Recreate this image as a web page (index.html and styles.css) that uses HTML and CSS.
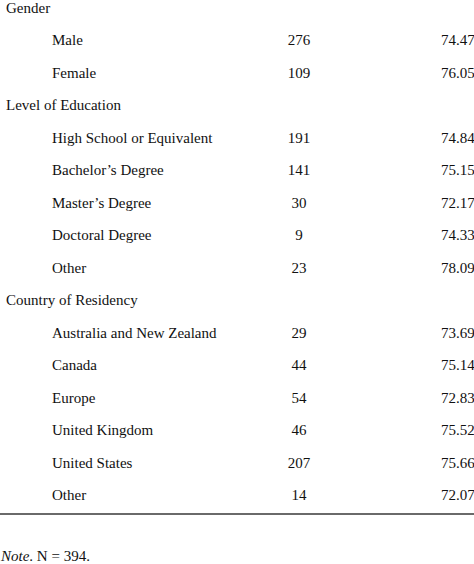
FILE: index.html
```html
<!DOCTYPE html>
<html>
<head>
<meta charset="utf-8">
<link rel="stylesheet" href="styles.css">
</head>
<body>
<div class="table">
  <div class="row"><span class="cat">Gender</span><span class="n"></span><span class="m"></span></div>
  <div class="row"><span class="sub">Male</span><span class="n">276</span><span class="m">74.47</span></div>
  <div class="row"><span class="sub">Female</span><span class="n">109</span><span class="m">76.05</span></div>
  <div class="row"><span class="cat">Level of Education</span><span class="n"></span><span class="m"></span></div>
  <div class="row"><span class="sub">High School or Equivalent</span><span class="n">191</span><span class="m">74.84</span></div>
  <div class="row"><span class="sub">Bachelor’s Degree</span><span class="n">141</span><span class="m">75.15</span></div>
  <div class="row"><span class="sub">Master’s Degree</span><span class="n">30</span><span class="m">72.17</span></div>
  <div class="row"><span class="sub">Doctoral Degree</span><span class="n">9</span><span class="m">74.33</span></div>
  <div class="row"><span class="sub">Other</span><span class="n">23</span><span class="m">78.09</span></div>
  <div class="row"><span class="cat">Country of Residency</span><span class="n"></span><span class="m"></span></div>
  <div class="row"><span class="sub">Australia and New Zealand</span><span class="n">29</span><span class="m">73.69</span></div>
  <div class="row"><span class="sub">Canada</span><span class="n">44</span><span class="m">75.14</span></div>
  <div class="row"><span class="sub">Europe</span><span class="n">54</span><span class="m">72.83</span></div>
  <div class="row"><span class="sub">United Kingdom</span><span class="n">46</span><span class="m">75.52</span></div>
  <div class="row"><span class="sub">United States</span><span class="n">207</span><span class="m">75.66</span></div>
  <div class="row"><span class="sub">Other</span><span class="n">14</span><span class="m">72.07</span></div>
</div>
<p class="note"><em>Note</em>. N = 394.</p>
</body>
</html>
```
FILE: styles.css
```css
html, body {
  margin: 0;
  padding: 0;
  background: #ffffff;
}
body {
  width: 474px;
  height: 564px;
  overflow: hidden;
  font-family: "Liberation Serif", "Times New Roman", serif;
  font-size: 15px;
  color: #111111;
}
.table {
  margin-top: -8.4px;
  padding-bottom: 1px;
  border-bottom: 2px solid #6a6a6a;
}
.row {
  display: grid;
  grid-template-columns: 270px 58px 146px;
  height: 32.5px;
  line-height: 32.5px;
  white-space: nowrap;
}
.cat {
  padding-left: 6px;
}
.sub {
  padding-left: 52px;
}
.n {
  text-align: center;
}
.m {
  padding-left: 113px;
}
.note {
  margin: 33px 0 0 1px;
  line-height: 17px;
}
```
